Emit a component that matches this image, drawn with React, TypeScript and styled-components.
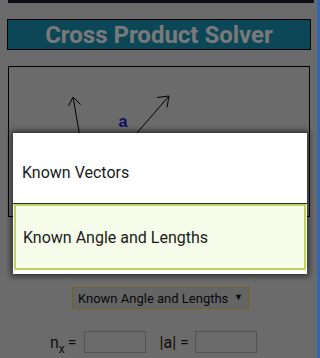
import React from 'react';
import styled, { createGlobalStyle } from 'styled-components';

const GlobalStyle = createGlobalStyle`
  html, body {
    margin: 0;
    padding: 0;
    background: #d6d6d6;
    font-family: Roboto, "Liberation Sans", Arial, sans-serif;
    overflow: hidden;
  }
`;

const Page = styled.div`
  width: 308px;
  height: 358px;
  padding: 0 7px;
  border-right: 2px solid #b0b0b0;
  box-sizing: content-box;
`;

const TopStrip = styled.div`
  height: 3px;
  margin: 0 1px;
  background: #1a1a2c;
`;

const TitleBar = styled.h1`
  margin: 16px 0 0;
  width: 304px;
  height: 31px;
  box-sizing: border-box;
  border: 1px solid #000;
  background: #168ead;
  display: flex;
  align-items: center;
  justify-content: center;
  color: #f2f2f2;
  font-size: 24px;
  font-weight: 700;
  line-height: 1;
`;

const Canvas = styled.div`
  margin: 16px 0 0 1px;
  width: 302px;
  height: 151px;
  box-sizing: border-box;
  border: 1px solid #000;
  overflow: hidden;
`;

const SelectWrap = styled.div`
  margin-top: 70px;
  display: flex;
  justify-content: center;
`;

const FakeSelect = styled.div`
  width: 178px;
  height: 22px;
  box-sizing: border-box;
  border: 1px solid #e8c450;
  background: #cbcbcb;
  display: flex;
  align-items: center;
  padding: 0 6px 0 5px;
  justify-content: space-between;
  font-size: 13px;
  color: #111;
`;

const Caret = styled.span`
  font-size: 9px;
  margin-bottom: 2px;
`;

const InputRow = styled.div`
  margin-top: 22px;
  padding-left: 43px;
  display: flex;
  align-items: center;
  font-size: 16px;
  color: #1c1c1c;
`;

const Label = styled.span<{ $gap: number }>`
  margin-right: ${(p) => p.$gap}px;
  white-space: pre;
`;

const Sub = styled.sub`
  font-size: 12px;
  vertical-align: -5px;
  line-height: 0;
`;

const Field = styled.div<{ $after?: number }>`
  width: 62px;
  height: 22px;
  box-sizing: border-box;
  border: 1px solid #a8a8a8;
  background: #d6d6d6;
  margin-right: ${(p) => p.$after ?? 0}px;
`;

const Overlay = styled.div`
  position: fixed;
  inset: 0;
  background: rgba(0, 0, 0, 0.5);
  z-index: 1;
`;

const Dialog = styled.div`
  position: fixed;
  top: 133px;
  left: 13px;
  width: 294px;
  background: #fff;
  padding-bottom: 4px;
  box-shadow: 0 0 6px 2px rgba(0, 0, 0, 0.6);
  z-index: 2;
`;

const Option = styled.div<{ $selected?: boolean }>`
  display: flex;
  align-items: center;
  box-sizing: border-box;
  font-size: 16px;
  color: #1a1a1a;
  height: ${(p) => (p.$selected ? '66px' : '71px')};
  padding: ${(p) => (p.$selected ? '0 0 0 7px' : '8px 0 0 9px')};
  margin: ${(p) => (p.$selected ? '0 1px' : '0')};
  background: ${(p) => (p.$selected ? '#f7fdeb' : '#fff')};
  border: ${(p) => (p.$selected ? '2px solid #bcd45e' : 'none')};
  border-bottom: ${(p) => (p.$selected ? '2px solid #bcd45e' : '1px solid #2a2a2a')};
`;

const ScrollEdge = styled.div`
  position: fixed;
  top: 0;
  right: 0;
  width: 3px;
  height: 100%;
  background: #3464b4;
  z-index: 3;
`;

const VectorSketch: React.FC = () => (
  <svg width="300" height="149" viewBox="9 67 300 149">
    <g stroke="#000" strokeWidth="1" fill="none">
      <line x1="73" y1="97" x2="84" y2="160" />
      <polyline points="68.5,106 73,97 80.5,104.5" />
      <line x1="169" y1="96" x2="110" y2="164" />
      <polyline points="157,97.5 169,96 167,107.5" />
    </g>
    <text
      x="118.5"
      y="127"
      fill="#1c1cd0"
      fontFamily="'Liberation Sans', Arial, sans-serif"
      fontWeight="700"
      fontSize="16"
    >
      a
    </text>
  </svg>
);

const options = ['Known Vectors', 'Known Angle and Lengths'];

const App: React.FC = () => {
  const selected = 1;
  return (
    <>
      <GlobalStyle />
      <Page>
        <TopStrip />
        <TitleBar>Cross Product Solver</TitleBar>
        <Canvas>
          <VectorSketch />
        </Canvas>
        <SelectWrap>
          <FakeSelect>
            <span>{options[selected]}</span>
            <Caret>▼</Caret>
          </FakeSelect>
        </SelectWrap>
        <InputRow>
          <Label $gap={3}>
            n<Sub>x</Sub>
          </Label>
          <Label $gap={7}>=</Label>
          <Field $after={14} />
          <Label $gap={6}>|a| =</Label>
          <Field />
        </InputRow>
      </Page>
      <Overlay />
      <Dialog>
        {options.map((o, i) => (
          <Option key={o} $selected={i === selected}>
            {o}
          </Option>
        ))}
      </Dialog>
      <ScrollEdge />
    </>
  );
};

export default App;
